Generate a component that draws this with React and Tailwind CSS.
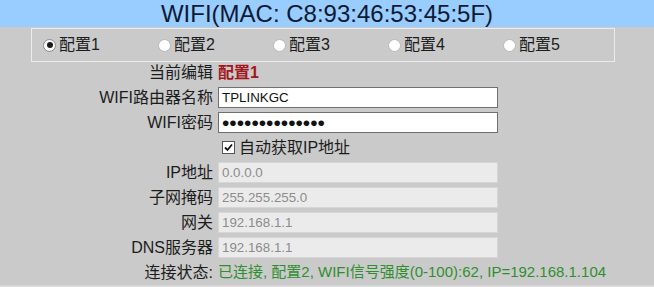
import React from "react";

const font = { fontFamily: '"Liberation Sans", "Noto Sans CJK SC", sans-serif' };

function Radio({ checked, label }) {
  return (
    <label className="flex items-center gap-[3px] pl-[11px]">
      <span
        className={
          "flex h-[13px] w-[13px] items-center justify-center rounded-full border bg-white " +
          (checked ? "border-[#8a8a8a]" : "border-[#b8b8b8]")
        }
      >
        {checked && <span className="h-[6px] w-[6px] rounded-full bg-[#1a1a1a]" />}
      </span>
      <span>{label}</span>
    </label>
  );
}

function Row({ label, children }) {
  return (
    <>
      <div className="flex h-[25px] items-center justify-end whitespace-nowrap">{label}</div>
      <div className="flex h-[25px] items-center">{children}</div>
    </>
  );
}

function Field({ value, disabled, type = "text" }) {
  const pw = type === "password";
  return (
    <input
      type={type}
      readOnly
      disabled={disabled}
      value={value}
      className={
        "h-[21px] w-[280px] px-[3px] py-0 outline-none " +
        (pw ? "text-[21px] leading-[19px] " : "text-[13.33px] ") +
        (disabled
          ? "border border-[#d6d6d6] bg-[#ebebeb] text-[#8c8c8c]"
          : "border border-[#707070] bg-white text-[#111]")
      }
      style={font}
    />
  );
}

export default function App() {
  const configs = ["配置1", "配置2", "配置3", "配置4", "配置5"];

  return (
    <div className="h-[287px] w-[654px] overflow-hidden bg-[#cacaca] text-[16px] text-[#1c1c1c]" style={font}>
      <div className="h-[27px] bg-[#99ccff] text-center text-[24px] leading-[27px] text-[#0d1a33]">
        WIFI(MAC: C8:93:46:53:45:5F)
      </div>

      <div className="ml-[31px] mt-[1px] grid h-[34px] w-[584px] grid-cols-[repeat(5,115px)] items-center border border-[#ececec]">
        {configs.map((c, i) => (
          <Radio key={c} label={c} checked={i === 0} />
        ))}
      </div>

      <div className="grid grid-cols-[213px_1fr] gap-x-[5px]">
        <div className="flex h-[23px] items-end justify-end">当前编辑</div>
        <div className="flex h-[23px] items-end font-bold text-[#a3161a]">配置1</div>

        <Row label="WIFI路由器名称">
          <Field value="TPLINKGC" />
        </Row>
        <Row label="WIFI密码">
          <Field type="password" value="xxxxxxxxxxxxxx" />
        </Row>
        <Row label="">
          <span className="ml-[4px] flex items-center gap-[4px]">
            <span className="flex h-[13px] w-[13px] items-center justify-center border border-[#555] bg-white">
              <svg width="11" height="11" viewBox="0 0 11 11">
                <path d="M2 5.5 L4.5 8 L9 2.5" fill="none" stroke="#111" strokeWidth="1.8" />
              </svg>
            </span>
            <span>自动获取IP地址</span>
          </span>
        </Row>
        <Row label="IP地址">
          <Field disabled value="0.0.0.0" />
        </Row>
        <Row label="子网掩码">
          <Field disabled value="255.255.255.0" />
        </Row>
        <Row label="网关">
          <Field disabled value="192.168.1.1" />
        </Row>
        <Row label="DNS服务器">
          <Field disabled value="192.168.1.1" />
        </Row>
        <Row label="连接状态:">
          <span className="whitespace-nowrap text-[15px] text-[#2f8f2f]">
            已连接, 配置2, WIFI信号强度(0-100):62, IP=192.168.1.104
          </span>
        </Row>
      </div>
      <div className="h-[4px] bg-[#d9d9d9]" />
    </div>
  );
}
